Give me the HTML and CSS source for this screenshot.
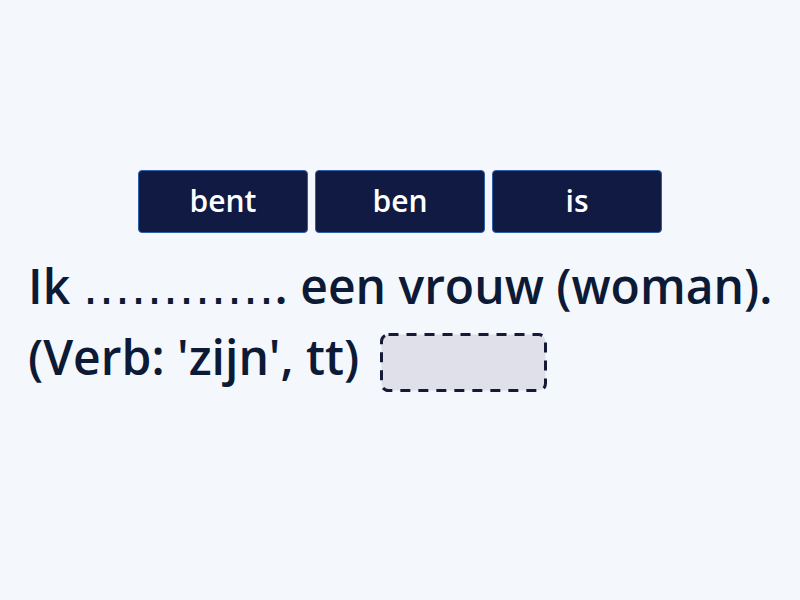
FILE: index.html
```html
<!DOCTYPE html>
<html>
<head>
<meta charset="utf-8">
<title>Invulzin</title>
<link rel="stylesheet" href="styles.css">
</head>
<body>
	<div id="game">
		<ul id="options">
			<li class="option">bent</li>
			<li class="option">ben</li>
			<li class="option">is</li>
		</ul>
		<div id="question">
			<p class="line">Ik <span class="dots">…………</span>. een vrouw (woman).</p>
			<p class="line">(Verb: 'zijn', tt) <svg class="slot" width="167" height="59" viewBox="0 0 167 59"><rect x="1.5" y="1.5" width="164" height="56" rx="7" ry="7" fill="#dfe0ea" stroke="#151a38" stroke-width="3" stroke-dasharray="10 8"/></svg></p>
		</div>
	</div>
</body>
</html>
```
FILE: styles.css
```css
html, body{margin: 0;padding: 0;}
body{
	background: #f4f7fc;
	font-family: "Open Sans", "Noto Sans", sans-serif;
	color: #0c1a36;
	width: 800px;
	height: 600px;
	overflow: hidden;
}
#game{padding: 170px 28px 0;}
#options{
	display: flex;
	justify-content: center;
	gap: 7px;
	margin: 0;
	padding: 0;
}
.option{
	list-style: none;
	width: 168px;
	height: 61px;
	line-height: 60px;
	text-align: center;
	background: #101a42;
	border: 1px solid #2f5ea8;
	border-radius: 4px;
	color: #fff;
	font-size: 30px;
	font-weight: 600;
}
#question{margin-top: 18px;}
.line{
	margin: 0;
	font-size: 48px;
	font-weight: 600;
	line-height: 69px;
	white-space: nowrap;
}
.dots{
	font-family: "DejaVu Sans", sans-serif;
	font-weight: normal;
}
.slot{
	display: inline-block;
	vertical-align: middle;
	margin-left: 8px;
}
```
